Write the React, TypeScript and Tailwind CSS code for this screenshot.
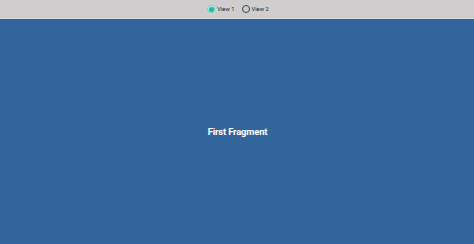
export default function App() {
  return (
    <div className="flex h-[244px] w-[474px] flex-col font-['Roboto',sans-serif]">
      <div className="flex h-[18px] items-center justify-center gap-[7px] bg-[#cfcdcd] pl-[2px] text-[5.8px] text-[#222]">
        <label className="flex items-center gap-[2px]">
          <span className="flex h-[8px] w-[8px] items-center justify-center rounded-full border border-[#5fd6c4] bg-[#bfeee6]">
            <span className="h-[5px] w-[5px] rounded-full bg-[#1fb8a0]" />
          </span>
          View 1
        </label>
        <label className="flex items-center gap-[2px]">
          <span className="h-[8px] w-[8px] rounded-full border border-[#444]" />
          View 2
        </label>
      </div>
      <div className="flex flex-1 items-center justify-center border-t border-[#d9d9d9] bg-[#31659c] pl-[1px] pt-[2px]">
        <span className="text-[9.4px] font-bold tracking-[-0.15px] text-white">First Fragment</span>
      </div>
    </div>
  );
}
